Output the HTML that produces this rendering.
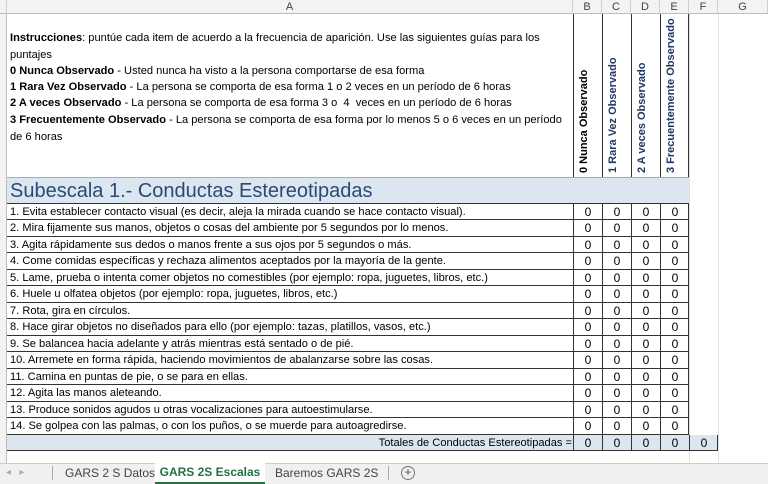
<!DOCTYPE html><html><head><meta charset="utf-8"><style>
*{margin:0;padding:0;box-sizing:border-box}
body{width:768px;height:484px;overflow:hidden;background:#fff;font-family:"Liberation Sans",sans-serif;position:relative;color:#000}
.a{position:absolute}
.ch{top:0;height:14px;background:#f3f3f3;border-bottom:1px solid #bdbdbd;border-right:1px solid #d0d0d0;font-size:11px;color:#444;text-align:center;line-height:14px}
.t{position:absolute;left:10px;font-size:11.1px;white-space:nowrap;line-height:16px}
.row{position:absolute;left:7px;width:682px;height:16.47px;border-bottom:1px solid #333}
.cell{position:absolute;top:0;height:100%;border-left:1px solid #333;font-size:12px;text-align:center;line-height:16px;width:29px}
.rot{position:absolute;top:159px;height:14px;transform-origin:left bottom;transform:rotate(-90deg);white-space:nowrap;font-size:11px;font-weight:bold;color:#1f3864;line-height:14px}
</style></head><body>
<div class="a ch" style="left:0;width:7px"></div>
<div class="a ch" style="left:7px;width:566px">A</div>
<div class="a ch" style="left:573px;width:29px">B</div>
<div class="a ch" style="left:602px;width:29px">C</div>
<div class="a ch" style="left:631px;width:29px">D</div>
<div class="a ch" style="left:660px;width:29px">E</div>
<div class="a ch" style="left:689px;width:29px">F</div>
<div class="a ch" style="left:718px;width:50px">G</div>
<div class="a" style="left:0;top:14px;width:7px;height:449px;background:#f3f3f3;border-right:1px solid #bdbdbd"></div>
<div class="a" style="left:718px;top:14px;width:1px;height:449px;background:#e0e0e0"></div>
<div class="a" style="left:689px;top:14px;width:1px;height:449px;background:#e0e0e0"></div>
<div class="t" style="top:30px"><b>Instrucciones</b>: puntúe cada item de acuerdo a la frecuencia de aparición. Use las siguientes guías para los</div>
<div class="t" style="top:47px">puntajes</div>
<div class="t" style="top:63px"><b>0 Nunca Observado</b> - Usted nunca ha visto a la persona comportarse de esa forma</div>
<div class="t" style="top:79px"><b>1 Rara Vez Observado</b> - La persona se comporta de esa forma 1 o 2 veces en un período de 6 horas</div>
<div class="t" style="top:95px"><b>2 A veces Observado</b> - La persona se comporta de esa forma 3 o&nbsp; 4&nbsp; veces en un período de 6 horas</div>
<div class="t" style="top:112px"><b>3 Frecuentemente Observado</b> - La persona se comporta de esa forma por lo menos 5 o 6 veces en un período</div>
<div class="t" style="top:129px">de 6 horas</div>
<div class="a" style="left:573px;top:14px;width:116px;height:163px;border-left:1px solid #333;border-right:1px solid #333"></div>
<div class="a" style="left:602px;top:14px;width:1px;height:163px;background:#333"></div>
<div class="a" style="left:631px;top:14px;width:1px;height:163px;background:#333"></div>
<div class="a" style="left:660px;top:14px;width:1px;height:163px;background:#333"></div>
<div class="rot" style="left:591px;color:#000">0 Nunca Observado</div>
<div class="rot" style="left:620px">1 Rara Vez Observado</div>
<div class="rot" style="left:649px">2 A veces Observado</div>
<div class="rot" style="left:678px">3 Frecuentemente Observado</div>
<div class="a" style="left:7px;top:177px;width:682px;height:27px;background:#dce6f1;border-top:1px solid #aaa;border-bottom:1px solid #333;font-size:20px;color:#2b4a72;line-height:26px;padding-left:3px;white-space:nowrap">Subescala 1.- Conductas Estereotipadas</div>
<div id="rows"></div>
<div class="a" style="left:0;top:463px;width:768px;height:21px;background:#f0f0f0;border-top:1px solid #ccc"></div>
<div class="a" style="left:6px;top:467px;font-size:10px;color:#aaa">◂ &nbsp; ▸</div>
<div class="a" style="left:52px;top:466px;width:1px;height:14px;background:#aaa"></div>
<div class="a" style="left:65px;top:466px;font-size:12px;color:#444">GARS 2 S Datos</div>
<div class="a" style="left:155px;top:463px;width:110px;height:21px;background:#fff;border-bottom:2px solid #217346;font-size:12px;font-weight:bold;color:#217346;text-align:center;line-height:18px">GARS 2S Escalas</div>
<div class="a" style="left:275px;top:466px;font-size:12px;color:#444">Baremos GARS 2S</div>
<div class="a" style="left:388px;top:466px;width:1px;height:14px;background:#aaa"></div>
<div class="a" style="left:401px;top:466px;width:14px;height:14px;border:1px solid #777;border-radius:50%;font-size:12px;line-height:11px;text-align:center;color:#555">+</div>
<script>
var items=["1. Evita establecer contacto visual (es decir, aleja la mirada cuando se hace contacto visual).","2. Mira fijamente sus manos, objetos o cosas del ambiente por 5 segundos por lo menos.","3. Agita rápidamente sus dedos o manos frente a sus ojos por 5 segundos o más.","4. Come comidas específicas y rechaza alimentos aceptados por la mayoría de la gente.","5. Lame, prueba o intenta comer objetos no comestibles (por ejemplo: ropa, juguetes, libros, etc.)","6. Huele u olfatea objetos (por ejemplo: ropa, juguetes, libros, etc.)","7. Rota, gira en círculos.","8. Hace girar objetos no diseñados para ello (por ejemplo: tazas, platillos, vasos, etc.)","9. Se balancea hacia adelante y atrás mientras está sentado o de pié.","10. Arremete en forma rápida, haciendo movimientos de abalanzarse sobre las cosas.","11. Camina en puntas de pie, o se para en ellas.","12. Agita las manos aleteando.","13. Produce sonidos agudos u otras vocalizaciones para autoestimularse.","14. Se golpea con las palmas, o con los puños, o se muerde para autoagredirse."];
var h="",y=204;
for(var i=0;i<15;i++){var tot=i==14;
h+='<div class="row" style="top:'+(y+i*16.47)+'px;'+(tot?'width:711px;background:#dce6f1;border-right:1px solid #333':'border-right:1px solid #333')+'">';
h+= tot?'<div style="position:absolute;right:145px;top:0;font-size:11.1px;line-height:16px">Totales de Conductas Estereotipadas =</div>':'<div style="position:absolute;left:3px;top:0;font-size:11.1px;line-height:16px;white-space:nowrap">'+items[i]+'</div>';
for(var c=0;c<(tot?5:4);c++)h+='<div class="cell" style="left:'+(566+c*29)+'px">0</div>';
h+='</div>';}
document.getElementById('rows').innerHTML=h;
</script>
</body></html>
